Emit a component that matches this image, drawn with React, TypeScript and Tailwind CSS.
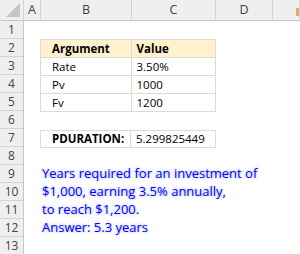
import React from 'react';

const colHeads = [
    { label: 'A', w: 'w-[17px]' },
    { label: 'B', w: 'w-[91px]' },
    { label: 'C', w: 'w-[84px]' },
    { label: 'D', w: 'w-[57px]' },
    { label: 'E', w: 'flex-1' },
];

const rows = [1, 2, 3, 4, 5, 6, 7, 8, 9, 10, 11, 12, 13];

const tableRows = [
    { arg: 'Rate', value: '3.50%' },
    { arg: 'Pv', value: '1000' },
    { arg: 'Fv', value: '1200' },
];

const note = [
    'Years required for an investment of',
    '$1,000, earning 3.5% annually,',
    'to reach $1,200.',
    'Answer: 5.3 years',
];

export default function App() {
    return (
        <div className="w-[300px] h-[254px] overflow-hidden bg-white font-['Open_Sans',Arial,sans-serif] text-[11.5px] text-black">
            {/* Column header */}
            <div className="flex h-[21px] bg-[#efefef] border-b border-[#c6c6c6]">
                <div className="w-[24px] h-full border-r border-[#d4d4d4] flex items-end justify-end p-[3px]">
                    <svg width="14" height="14" viewBox="0 0 14 14">
                        <polygon points="14,0 14,14 0,14" fill="#c4c4c4" />
                    </svg>
                </div>
                {colHeads.map(c => (
                    <div
                        key={c.label}
                        className={`${c.w} h-full border-r border-[#d4d4d4] flex items-center justify-center text-[12.5px] text-[#444] relative`}
                    >
                        {c.label === 'E' ? (
                            <span className="absolute right-0 top-[8px] w-[3px] h-[8px] bg-[#d9b26a]" />
                        ) : (
                            c.label
                        )}
                    </div>
                ))}
            </div>

            <div className="flex">
                {/* Row numbers */}
                <div className="w-[24px] shrink-0 bg-[#efefef] border-r border-[#c6c6c6]">
                    {rows.map(r => (
                        <div key={r} className="h-[18px] border-b border-[#d4d4d4] flex items-center justify-center text-[12px] text-[#444]">
                            {r}
                        </div>
                    ))}
                </div>

                {/* Sheet */}
                <div className="flex-1 pl-[16px]">
                    <div className="h-[18px]" />

                    <div className="w-[176px] border-t border-l border-[#dadada]">
                        <div className="flex h-[18px] bg-[#fff2cc] font-bold">
                            <div className="w-[91px] pl-[11px] border-r border-b border-[#dadada] flex items-center">Argument</div>
                            <div className="w-[85px] pl-[5px] border-r border-b border-[#dadada] flex items-center">Value</div>
                        </div>
                        {tableRows.map(r => (
                            <div key={r.arg} className="flex h-[18px]">
                                <div className="w-[91px] pl-[11px] border-r border-b border-[#dadada] flex items-center">{r.arg}</div>
                                <div className="w-[85px] pl-[5px] border-r border-b border-[#dadada] flex items-center">{r.value}</div>
                            </div>
                        ))}
                    </div>

                    <div className="h-[18px]" />

                    <div className="w-[176px] flex h-[18px] border border-[#dadada]">
                        <div className="w-[90px] pl-[11px] border-r border-[#dadada] flex items-center font-bold">PDURATION:</div>
                        <div className="w-[84px] pl-[5px] flex items-center">5.299825449</div>
                    </div>

                    <div className="h-[18px]" />

                    <div className="pl-[2px] text-[13px] text-[#0000ff] whitespace-nowrap [text-shadow:0_0_3px_rgba(60,90,255,0.55)]">
                        {note.map(line => (
                            <div key={line} className="h-[18px] leading-[14px]">{line}</div>
                        ))}
                    </div>
                </div>
            </div>
        </div>
    );
}
